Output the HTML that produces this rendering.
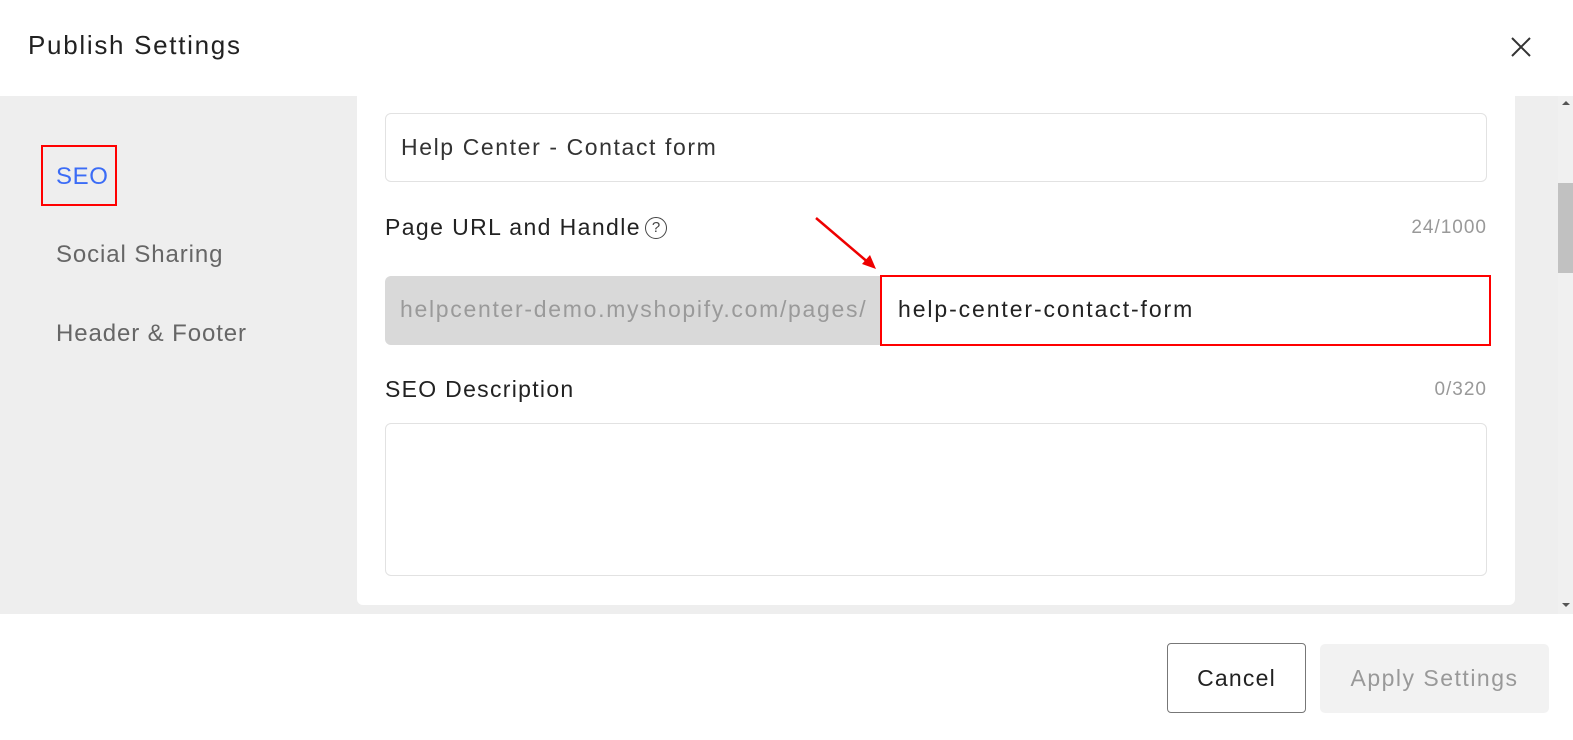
<!DOCTYPE html>
<html><head><style>
*{box-sizing:border-box;margin:0;padding:0}
body{width:1573px;height:740px;background:#fff;font-family:"Liberation Sans",sans-serif;position:relative;overflow:hidden;color:#222}
.a{position:absolute;white-space:nowrap}
</style></head><body>
<div class="a" style="left:28px;top:30px;font-size:26px;letter-spacing:1.7px;color:#222">Publish Settings</div>
<svg class="a" style="left:1510px;top:36px" width="22" height="22"><path d="M2 2L20 20M20 2L2 20" stroke="#333" stroke-width="2"/></svg>
<div class="a" style="left:0;top:96px;width:1573px;height:518px;background:#eeeeee"></div>
<div class="a" style="left:1558px;top:96px;width:15px;height:518px;background:#f0f0f0"></div>
<div class="a" style="left:1558px;top:183px;width:15px;height:90px;background:#c1c1c1"></div>
<div class="a" style="left:1562px;top:101px;width:0;height:0;border-left:4px solid transparent;border-right:4px solid transparent;border-bottom:4px solid #555"></div>
<div class="a" style="left:1562px;top:603px;width:0;height:0;border-left:4px solid transparent;border-right:4px solid transparent;border-top:4px solid #555"></div>
<div class="a" style="left:41px;top:145px;width:76px;height:61px;border:2px solid #f00"></div>
<div class="a" style="left:56px;top:163px;font-size:24px;letter-spacing:0.6px;color:#3b6cf6">SEO</div>
<div class="a" style="left:56px;top:241px;font-size:24px;letter-spacing:0.9px;color:#666">Social Sharing</div>
<div class="a" style="left:56px;top:320px;font-size:24px;letter-spacing:0.9px;color:#666">Header &amp; Footer</div>
<div class="a" style="left:357px;top:96px;width:1158px;height:509px;background:#fff;border-radius:0 0 6px 6px"></div>
<div class="a" style="left:385px;top:113px;width:1102px;height:69px;border:1px solid #e2e2e2;border-radius:6px"></div>
<div class="a" style="left:401px;top:134px;font-size:23px;letter-spacing:1.6px;color:#333">Help Center - Contact form</div>
<div class="a" style="left:385px;top:214px;font-size:23px;letter-spacing:1.4px;color:#222">Page URL and Handle</div>
<div class="a" style="left:645px;top:217px;width:22px;height:22px;border:1.5px solid #444;border-radius:50%;font-size:15px;text-align:center;line-height:19px;color:#444">?</div>
<div class="a" style="right:86px;top:217px;font-size:19px;letter-spacing:1px;color:#999">24/1000</div>
<svg class="a" style="left:810px;top:212px" width="70" height="60"><path d="M6 6L60 52" stroke="#e00" stroke-width="2.5"/><path d="M66 57L52 52L60 43Z" fill="#e00"/></svg>
<div class="a" style="left:385px;top:276px;width:495px;height:69px;background:#d9d9d9;border-radius:6px 0 0 6px"></div>
<div class="a" style="left:400px;top:296px;font-size:23px;letter-spacing:1.7px;color:#9a9a9a">helpcenter-demo.myshopify.com/pages/</div>
<div class="a" style="left:880px;top:275px;width:611px;height:71px;border:2px solid #f00"></div>
<div class="a" style="left:898px;top:296px;font-size:23px;letter-spacing:1.9px;color:#222">help-center-contact-form</div>
<div class="a" style="left:385px;top:376px;font-size:23px;letter-spacing:1.3px;color:#222">SEO Description</div>
<div class="a" style="right:86px;top:379px;font-size:19px;letter-spacing:1px;color:#999">0/320</div>
<div class="a" style="left:385px;top:423px;width:1102px;height:153px;border:1px solid #e2e2e2;border-radius:6px"></div>
<div class="a" style="left:1167px;top:643px;width:139px;height:70px;border:1px solid #777;border-radius:4px;font-size:23px;letter-spacing:1.2px;text-align:center;line-height:68px;color:#222">Cancel</div>
<div class="a" style="left:1320px;top:644px;width:229px;height:69px;background:#f2f2f2;border-radius:5px;font-size:23px;letter-spacing:1.5px;text-align:center;line-height:69px;color:#999">Apply Settings</div>
</body></html>
